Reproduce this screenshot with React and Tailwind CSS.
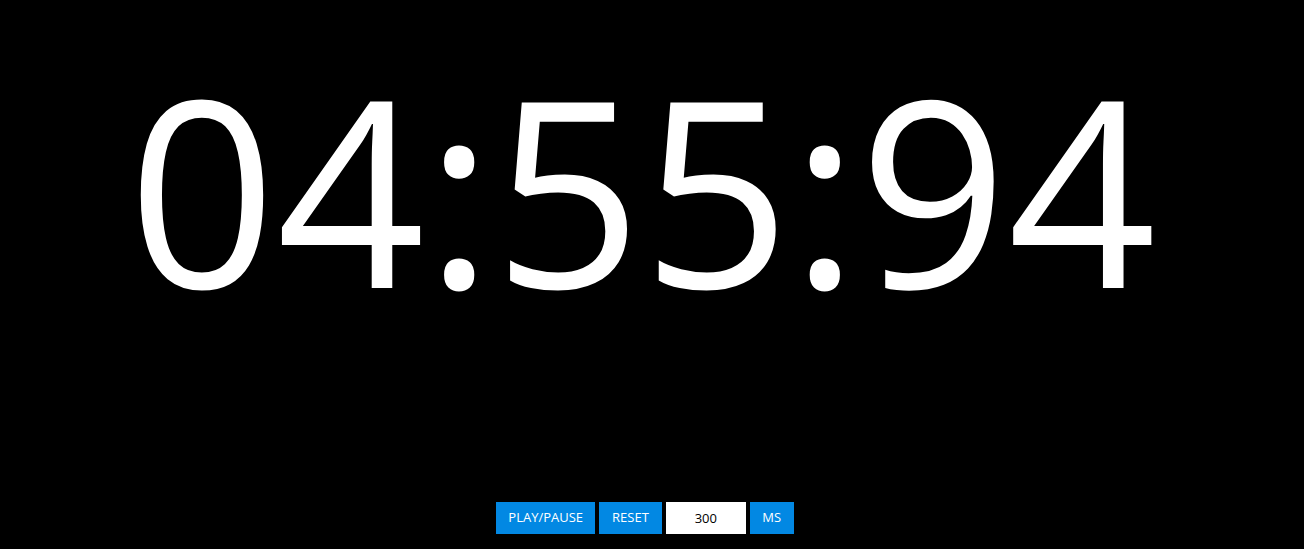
export default function App() {
  return (
    <div className="h-screen w-full bg-black flex flex-col items-center overflow-hidden" style={{ fontFamily: '"Open Sans", sans-serif' }}>
      <div className="flex-1 w-full flex justify-center pt-[10px] pr-[20px]">
        <div className="text-white text-[260px] leading-[1.362] font-normal">04:55:94</div>
      </div>
      <div className="flex gap-1 pb-[15px] pr-[14px]">
        <button className="h-8 px-[12px] bg-[#0288e3] text-white text-[13px]">PLAY/PAUSE</button>
        <button className="h-8 px-[13px] bg-[#0288e3] text-white text-[13px]">RESET</button>
        <input defaultValue="300" className="h-8 w-20 bg-white text-black text-[13px] text-center outline-none" />
        <button className="h-8 px-[12.5px] bg-[#0288e3] text-white text-[13px]">MS</button>
      </div>
    </div>
  );
}
